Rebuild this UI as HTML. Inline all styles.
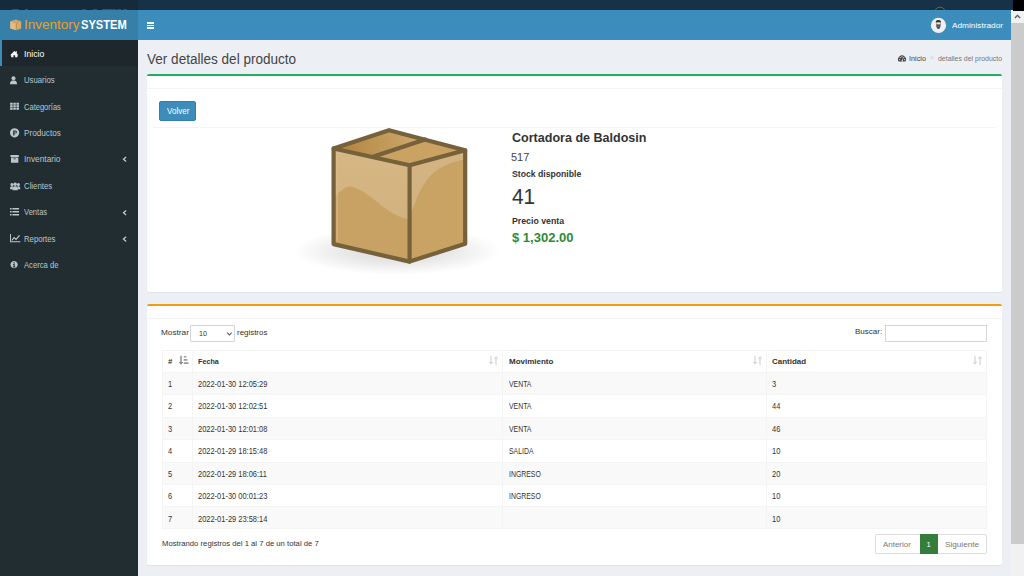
<!DOCTYPE html>
<html><head><meta charset="utf-8">
<style>
*{margin:0;padding:0;box-sizing:border-box}
html,body{width:1024px;height:576px;overflow:hidden;background:#ecf0f5;font-family:"Liberation Sans",sans-serif}
.a{position:absolute}
.t{position:absolute;white-space:pre;line-height:1;transform-origin:0 0}
</style></head><body>
<div class="a" style="left:0px;top:0px;width:1024px;height:10px;background:#152a3a"></div>
<div class="a" style="left:138px;top:0px;width:875px;height:10px;background:#173247"></div>
<div class="a" style="left:1013px;top:0px;width:11px;height:11px;background:#000"></div>
<div class="a" style="left:0px;top:10px;width:138px;height:30px;background:#367fa9"></div>
<div class="a" style="left:138px;top:10px;width:873px;height:30px;background:#3c8dbc"></div>
<div class="a" style="left:0px;top:40px;width:138px;height:536px;background:#222d32"></div>
<div class="a" style="left:1011px;top:10px;width:13px;height:566px;background:#f1f1f1"></div>
<div class="a" style="left:1013px;top:10px;width:11px;height:1px;background:#000"></div>
<div class="a" style="left:1011px;top:23px;width:13px;height:521px;background:#cbcbcb"></div>
<svg class="a" style="left:1011px;top:10px" width="13" height="13" viewBox="1011 10 13 13"><polyline points="1014.9,18 1017.5,15.4 1020.1,18" fill="none" stroke="#555" stroke-width="1.3"/></svg>
<div class="a" style="left:12px;top:9px;width:7px;height:1px;background:rgba(200,140,60,.35)"></div>
<div class="a" style="left:25px;top:9px;width:3px;height:1px;background:rgba(230,160,40,.3)"></div>
<div class="a" style="left:82px;top:9px;width:4px;height:1px;background:rgba(200,210,220,.22)"></div>
<div class="a" style="left:93px;top:9px;width:4px;height:1px;background:rgba(200,210,220,.22)"></div>
<div class="a" style="left:102px;top:9px;width:14px;height:1px;background:rgba(200,210,220,.22)"></div>
<div class="a" style="left:117px;top:9px;width:4px;height:1px;background:rgba(200,210,220,.22)"></div>
<div class="a" style="left:123px;top:9px;width:4px;height:1px;background:rgba(200,210,220,.22)"></div>
<svg class="a" style="left:930px;top:5px" width="20" height="5" viewBox="930 5 20 5"><circle cx="940" cy="12.6" r="5.4" fill="rgba(40,40,40,.7)" stroke="rgba(170,170,170,.45)" stroke-width="1"/></svg>
<svg class="a" style="left:8px;top:17px" width="16" height="16" viewBox="8 17 16 16">
<polygon points="15.8,19.6 21.2,21.3 16.2,23.2 10.2,21.3" fill="#d3a55e"/>
<polygon points="10.2,21.3 16.2,23.2 16.2,30.2 10.2,28.4" fill="#e6bd7c"/>
<polygon points="16.2,23.2 21.2,21.3 21.2,28.4 16.2,30.2" fill="#d8aa63"/>
<line x1="16.2" y1="23.2" x2="16.2" y2="30.2" stroke="#b98c48" stroke-width="0.8"/>
</svg>
<div class="t" style="left:23.9px;top:18.9px;font-size:12.75px;color:#f39c12;transform:scaleX(1.06);">Inventory</div>
<div class="t" style="left:80.76px;top:19.48px;font-size:12.56px;color:#fff;font-weight:bold;transform:scaleX(0.888);">SYSTEM</div>
<div class="a" style="left:147px;top:22.3px;width:7.4px;height:1.7px;background:#fff"></div>
<div class="a" style="left:147px;top:24.9px;width:7.4px;height:1.4px;background:#fff"></div>
<div class="a" style="left:147px;top:27.1px;width:7.4px;height:1.7px;background:#fff"></div>
<svg class="a" style="left:929px;top:16px" width="19" height="19" viewBox="929 16 19 19">
<circle cx="938.5" cy="25.4" r="7.6" fill="#f0f0f0"/>
<path d="M935.8,22 C935.8,20.6 936.9,19.9 938.4,19.9 C939.9,19.9 941,20.6 941,22 L940.8,25.5 C940.6,27.6 939.6,28.9 938.4,28.9 C937.2,28.9 936.2,27.6 936,25.5 Z" fill="#9a9a9a"/>
<path d="M936.6,22.3 h3.6 v2.0 h-3.6 Z" fill="#e6e6e6"/>
<path d="M935.8,22.2 C935.8,20.6 936.9,19.9 938.4,19.9 C939.9,19.9 941,20.6 941,22.2 L940.6,22.2 L936.2,22.2 Z" fill="#333"/>
<path d="M936.4,24.4 h4 C940.3,27 939.6,28.9 938.4,28.9 C937.2,28.9 936.5,27 936.4,24.4 Z" fill="#505050"/>
<path d="M937.6,25.8 h1.6 v0.7 h-1.6 Z" fill="#8a8a8a"/>
</svg>
<div class="t" style="left:952.24px;top:21.71px;font-size:8.01px;color:#fff;transform:scaleX(1.034);">Administrador</div>
<div class="a" style="left:0px;top:40px;width:138px;height:26.4px;background:#1e282c"></div>
<div class="a" style="left:0px;top:40px;width:2px;height:26.4px;background:#3c8dbc"></div>
<div class="t" style="left:23.62px;top:49.74px;font-size:8.6px;color:#fff;transform:scaleX(1.008);">Inicio</div>
<div class="t" style="left:23.78px;top:76.14px;font-size:8.6px;color:#b8c7ce;transform:scaleX(0.903);">Usuarios</div>
<div class="t" style="left:24.02px;top:102.54px;font-size:8.6px;color:#b8c7ce;transform:scaleX(0.877);">Categorías</div>
<div class="t" style="left:23.75px;top:128.94px;font-size:8.6px;color:#b8c7ce;transform:scaleX(0.951);">Productos</div>
<div class="t" style="left:23.65px;top:155.34px;font-size:8.6px;color:#b8c7ce;transform:scaleX(0.967);">Inventario</div>
<div class="t" style="left:24.01px;top:181.74px;font-size:8.6px;color:#b8c7ce;transform:scaleX(0.908);">Clientes</div>
<div class="t" style="left:24.32px;top:208.14px;font-size:8.6px;color:#b8c7ce;transform:scaleX(0.88);">Ventas</div>
<div class="t" style="left:23.78px;top:234.54px;font-size:8.6px;color:#b8c7ce;transform:scaleX(0.902);">Reportes</div>
<div class="t" style="left:24.4px;top:260.94px;font-size:8.6px;color:#b8c7ce;transform:scaleX(0.89);">Acerca de</div>
<svg class="a" style="left:0;top:40px" width="138" height="240" viewBox="0 40 138 240">
<g fill="#fff">
<path d="M10.2,55.2 L14.3,51 L15.6,52.3 L15.6,51.2 L16.8,51.2 L16.8,53.5 L18.4,55.2 L17.4,55.2 L17.4,57.2 L15.2,57.2 L15.2,55.3 L13.4,55.3 L13.4,57.2 L11.2,57.2 L11.2,55.2 Z"/>
</g>
<g fill="#b8c7ce">
<circle cx="13.5" cy="78.3" r="2"/>
<path d="M10,84.2 C10,81.5 11.2,80.4 12.3,80.4 L14.7,80.4 C15.8,80.4 17,81.5 17,84.2 Z"/>
<path d="M10.1,102.7h2.6v2.1h-2.6zM13.3,102.7h2.5v2.1h-2.5zM16.4,102.7h2.6v2.1h-2.6zM10.1,105.3h2.6v2h-2.6zM13.3,105.3h2.5v2h-2.5zM16.4,105.3h2.6v2h-2.6zM10.1,107.8h2.6v2h-2.6zM13.3,107.8h2.5v2h-2.5zM16.4,107.8h2.6v2h-2.6z"/>
<path fill-rule="evenodd" d="M14.6,128.2 a4.6,4.6 0 1,0 0.01,0 Z M13.2,130.6 h2.2 a1.5,1.5 0 0,1 0,3 h-1 v1.8 h-1.2 Z M14.4,131.6 v1.1 h0.9 a0.55,0.55 0 0,0 0,-1.1 Z"/>
<path fill-rule="evenodd" d="M10.5,155 h8.3 v2 h-8.3 Z M11,157.6 h7.3 v5.1 h-7.3 Z M13.6,158.4 h2.1 v0.9 h-2.1 Z"/>
<path d="M11.9,184.6 m-1.5,0 a1.5,1.5 0 1,0 3,0 a1.5,1.5 0 1,0 -3,0 Z M18.4,184.6 m-1.5,0 a1.5,1.5 0 1,0 3,0 a1.5,1.5 0 1,0 -3,0 Z M15.15,184.2 m-1.8,0 a1.8,1.8 0 1,0 3.6,0 a1.8,1.8 0 1,0 -3.6,0 Z M10,189.2 c0,-2 0.5,-3 1.6,-3 h1.4 c-0.3,0.6 -0.4,1.6 -0.4,3 Z M20.3,189.2 c0,-2 -0.5,-3 -1.6,-3 h-1.4 c0.3,0.6 0.4,1.6 0.4,3 Z M12.5,190.2 c0,-2.6 0.7,-3.9 2.1,-3.9 h1.1 c1.4,0 2.1,1.3 2.1,3.9 Z"/>
<path d="M10,208h1.6v1.6h-1.6zM12.4,208h6.6v1.6h-6.6zM10,211h1.6v1.6h-1.6zM12.4,211h6.6v1.6h-6.6zM10,214h1.6v1.6h-1.6zM12.4,214h6.6v1.6h-6.6z"/>
<path d="M10,234 h1 v7.2 h9.3 v1 h-10.3 Z M11.5,240 L14,236.8 L16,238.6 L19,235 L20,235.8 L16.1,240.3 L14.1,238.5 L12.3,240.8 Z"/>
<path fill-rule="evenodd" d="M14.1,261 a3.6,3.6 0 1,0 0.01,0 Z M13.5,262.3 h1.2 v1.1 h-1.2 Z M13,263.9 h1.7 v2.7 h0.6 v0.8 h-2.3 v-0.8 h0.6 v-1.9 h-0.6 Z"/>
</g>
<g fill="none" stroke="#b8c7ce" stroke-width="1.35" stroke-linecap="butt" stroke-linejoin="miter">
<polyline points="126.1,156.9 123.5,159.2 126.1,161.5"/>
<polyline points="126.1,210.5 123.5,212.8 126.1,215.1"/>
<polyline points="126.1,236.8 123.5,239.1 126.1,241.4"/>
</g>
</svg>
<div class="t" style="left:146.86px;top:51.5px;font-size:14.18px;color:#444;transform:scaleX(0.956);">Ver detalles del producto</div>
<svg class="a" style="left:896px;top:53px" width="12" height="10" viewBox="896 53 12 10">
<path d="M898.6,61.6 A4,4 0 1,1 905.4,61.6 Z" fill="#444"/>
<circle cx="899.5" cy="59.6" r="0.6" fill="#ecf0f5"/><circle cx="900.3" cy="57.6" r="0.6" fill="#ecf0f5"/><circle cx="902" cy="56.7" r="0.6" fill="#ecf0f5"/><circle cx="903.7" cy="57.6" r="0.6" fill="#ecf0f5"/><circle cx="904.5" cy="59.6" r="0.6" fill="#ecf0f5"/>
<path d="M901.3,61.2 L903.2,57.8 L902.7,61.3 Z" fill="#ecf0f5"/>
</svg>
<div class="t" style="left:908.86px;top:55.09px;font-size:7.0px;color:#444;transform:scaleX(1.038);">Inicio</div>
<div class="t" style="left:929.8px;top:55.0px;font-size:6.8px;color:#ccc;">&gt;</div>
<div class="t" style="left:938.22px;top:54.73px;font-size:7.0px;color:#777;transform:scaleX(0.992);">detalles del producto</div>
<div class="a" style="left:147px;top:74px;width:855px;height:218px;background:#fff;box-shadow:0 1px 1px rgba(0,0,0,.06);border-radius:2px"></div>
<div class="a" style="left:147px;top:74px;width:855px;height:2px;background:#22ad64;border-radius:2px 2px 0 0"></div>
<div class="a" style="left:147px;top:87.5px;width:855px;height:1px;background:#f4f4f4"></div>
<div class="a" style="left:159px;top:100.5px;width:37.2px;height:20.7px;background:#3c8dbc;border:1px solid #367fa9;border-radius:2px"></div>
<div class="t" style="left:166.66px;top:107.1px;font-size:8.7px;color:#fff;transform:scaleX(0.926);">Volver</div>
<div class="a" style="left:153px;top:127.3px;width:843px;height:1px;background:#f4f4f4"></div>
<svg class="a" style="left:280px;top:120px" width="240" height="170" viewBox="280 120 240 170">
<defs>
<radialGradient id="sh" cx="0.5" cy="0.5" r="0.5">
<stop offset="0" stop-color="#000" stop-opacity="0.16"/>
<stop offset="0.5" stop-color="#000" stop-opacity="0.09"/>
<stop offset="1" stop-color="#000" stop-opacity="0"/>
</radialGradient>
<linearGradient id="fl" x1="0" y1="0" x2="0" y2="1">
<stop offset="0" stop-color="#d6b886"/>
<stop offset="1" stop-color="#d0ae78"/>
</linearGradient>
<linearGradient id="tf" x1="345" y1="152" x2="415" y2="135" gradientUnits="userSpaceOnUse">
<stop offset="0" stop-color="#b38743"/>
<stop offset="1" stop-color="#cca86c"/>
</linearGradient>
</defs>
<ellipse cx="397" cy="251" rx="104" ry="24" fill="url(#sh)"/>
<polygon points="333.6,148.5 409.6,165.2 409.6,261.6 333.6,244.1" fill="url(#fl)"/>
<path d="M333.6,199 C340,191 345,186 351,186.5 C364,189 378,204 392,213 C398,216.5 404,218.5 409.6,219.5 L409.6,261.6 L333.6,244.1 Z" fill="#c8a264"/>
<polygon points="409.6,165.2 465.2,150.3 465.2,243.7 409.6,261.6" fill="#d3b381"/>
<path d="M411,214 C416,199 421,186 431,175 C441,166 452,161.5 465.2,159.5 L465.2,243.7 L409.6,261.6 Z" fill="#c9a364"/>
<polygon points="389,130.2 333.6,148.5 372.2,156.9 425,139.4" fill="url(#tf)"/>
<polygon points="372.2,156.9 425,139.4 465.2,150.3 409.6,165.2" fill="#c9a264"/>
<line x1="337" y1="152" x2="337" y2="241" stroke="#dcbd8a" stroke-width="1"/>
<g fill="none" stroke="#76613a" stroke-width="4.2" stroke-linejoin="round" stroke-linecap="round">
<polygon points="389,130.2 465.2,150.3 465.2,243.7 409.6,261.6 333.6,244.1 333.6,148.5"/>
<polyline points="333.6,148.5 409.6,165.2 465.2,150.3"/>
<line x1="409.6" y1="165.2" x2="409.6" y2="261.6"/>
<line x1="372.2" y1="156.9" x2="425" y2="139.4"/>
</g>
</svg>
<div class="t" style="left:512.22px;top:131.7px;font-size:12.81px;color:#333;font-weight:bold;transform:scaleX(0.98);">Cortadora de Baldosin</div>
<div class="t" style="left:511.11px;top:151.59px;font-size:10.86px;color:#444;transform:scaleX(1.012);">517</div>
<div class="t" style="left:512.46px;top:169.82px;font-size:9.04px;color:#333;font-weight:bold;transform:scaleX(0.958);">Stock disponible</div>
<div class="t" style="left:512.28px;top:185.66px;font-size:22.29px;color:#333;transform:scaleX(0.933);">41</div>
<div class="t" style="left:512.1px;top:217.44px;font-size:8.49px;color:#333;font-weight:bold;transform:scaleX(1.032);">Precio venta</div>
<div class="t" style="left:512.37px;top:230.5px;font-size:13.6px;color:#2f8a36;font-weight:bold;transform:scaleX(0.958);">$ 1,302.00</div>
<div class="a" style="left:147px;top:304px;width:855px;height:261px;background:#fff;box-shadow:0 1px 1px rgba(0,0,0,.06);border-radius:2px"></div>
<div class="a" style="left:147px;top:304px;width:855px;height:2px;background:#f39c12;border-radius:2px 2px 0 0"></div>
<div class="a" style="left:147px;top:317.5px;width:855px;height:1px;background:#f4f4f4"></div>
<div class="t" style="left:161.11px;top:329.1px;font-size:8.0px;color:#333;transform:scaleX(1.028);">Mostrar</div>
<div class="a" style="left:190.2px;top:324.9px;width:45.1px;height:17.6px;border:1px solid #d2d6de;background:#fff;border-radius:1px"></div>
<div class="t" style="left:198.95px;top:330.63px;font-size:7.14px;color:#333;transform:scaleX(0.99);">10</div>
<svg class="a" style="left:225px;top:330px" width="9" height="8" viewBox="225 330 9 8"><polyline points="227.2,332.6 229.4,335 231.6,332.6" fill="none" stroke="#555" stroke-width="1.1"/></svg>
<div class="t" style="left:236.89px;top:328.83px;font-size:8.0px;color:#333;transform:scaleX(0.99);">registros</div>
<div class="t" style="left:855.12px;top:328.22px;font-size:8.0px;color:#333;transform:scaleX(1.004);">Buscar:</div>
<div class="a" style="left:885.3px;top:324.9px;width:101.7px;height:17.6px;border:1px solid #d2d6de;background:#fff"></div>
<div class="a" style="left:162px;top:371.7px;width:825px;height:22.45px;background:#f9f9f9;border-top:1px solid #f4f4f4"></div>
<div class="a" style="left:162px;top:394.15px;width:825px;height:22.45px;background:#fff;border-top:1px solid #f4f4f4"></div>
<div class="a" style="left:162px;top:416.6px;width:825px;height:22.45px;background:#f9f9f9;border-top:1px solid #f4f4f4"></div>
<div class="a" style="left:162px;top:439.05px;width:825px;height:22.45px;background:#fff;border-top:1px solid #f4f4f4"></div>
<div class="a" style="left:162px;top:461.5px;width:825px;height:22.45px;background:#f9f9f9;border-top:1px solid #f4f4f4"></div>
<div class="a" style="left:162px;top:483.95px;width:825px;height:22.45px;background:#fff;border-top:1px solid #f4f4f4"></div>
<div class="a" style="left:162px;top:506.4px;width:825px;height:22.45px;background:#f9f9f9;border-top:1px solid #f4f4f4"></div>
<div class="a" style="left:162px;top:349.5px;width:825px;height:179.35px;border:1px solid #f4f4f4"></div>
<div class="a" style="left:192px;top:349.5px;width:1px;height:179.35px;background:#f4f4f4"></div>
<div class="a" style="left:501.6px;top:349.5px;width:1px;height:179.35px;background:#f4f4f4"></div>
<div class="a" style="left:766px;top:349.5px;width:1px;height:179.35px;background:#f4f4f4"></div>
<div class="t" style="left:168.1px;top:358.01px;font-size:7.75px;color:#333;font-weight:bold;">#</div>
<div class="t" style="left:198.2px;top:358.01px;font-size:7.75px;color:#333;font-weight:bold;transform:scaleX(0.93);">Fecha</div>
<div class="t" style="left:508.8px;top:358.01px;font-size:7.75px;color:#333;font-weight:bold;transform:scaleX(1.03);">Movimiento</div>
<div class="t" style="left:772.0px;top:358.01px;font-size:7.75px;color:#333;font-weight:bold;transform:scaleX(1.03);">Cantidad</div>
<div class="t" style="left:168.0px;top:379.94px;font-size:8.3px;color:#333;transform:scaleX(0.9);">1</div>
<div class="t" style="left:198.1px;top:379.94px;font-size:8.3px;color:#333;transform:scaleX(0.9);">2022-01-30 12:05:29</div>
<div class="t" style="left:508.7px;top:379.94px;font-size:8.3px;color:#333;transform:scaleX(0.83);">VENTA</div>
<div class="t" style="left:771.9px;top:379.94px;font-size:8.3px;color:#333;transform:scaleX(0.9);">3</div>
<div class="t" style="left:168.0px;top:402.39px;font-size:8.3px;color:#333;transform:scaleX(0.9);">2</div>
<div class="t" style="left:198.1px;top:402.39px;font-size:8.3px;color:#333;transform:scaleX(0.9);">2022-01-30 12:02:51</div>
<div class="t" style="left:508.7px;top:402.39px;font-size:8.3px;color:#333;transform:scaleX(0.83);">VENTA</div>
<div class="t" style="left:771.9px;top:402.39px;font-size:8.3px;color:#333;transform:scaleX(0.9);">44</div>
<div class="t" style="left:168.0px;top:424.84px;font-size:8.3px;color:#333;transform:scaleX(0.9);">3</div>
<div class="t" style="left:198.1px;top:424.84px;font-size:8.3px;color:#333;transform:scaleX(0.9);">2022-01-30 12:01:08</div>
<div class="t" style="left:508.7px;top:424.84px;font-size:8.3px;color:#333;transform:scaleX(0.83);">VENTA</div>
<div class="t" style="left:771.9px;top:424.84px;font-size:8.3px;color:#333;transform:scaleX(0.9);">46</div>
<div class="t" style="left:168.0px;top:447.29px;font-size:8.3px;color:#333;transform:scaleX(0.9);">4</div>
<div class="t" style="left:198.1px;top:447.29px;font-size:8.3px;color:#333;transform:scaleX(0.9);">2022-01-29 18:15:48</div>
<div class="t" style="left:508.7px;top:447.29px;font-size:8.3px;color:#333;transform:scaleX(0.83);">SALIDA</div>
<div class="t" style="left:771.9px;top:447.29px;font-size:8.3px;color:#333;transform:scaleX(0.9);">10</div>
<div class="t" style="left:168.0px;top:469.75px;font-size:8.3px;color:#333;transform:scaleX(0.9);">5</div>
<div class="t" style="left:198.1px;top:469.75px;font-size:8.3px;color:#333;transform:scaleX(0.9);">2022-01-29 18:06:11</div>
<div class="t" style="left:508.7px;top:469.75px;font-size:8.3px;color:#333;transform:scaleX(0.83);">INGRESO</div>
<div class="t" style="left:771.9px;top:469.75px;font-size:8.3px;color:#333;transform:scaleX(0.9);">20</div>
<div class="t" style="left:168.0px;top:492.19px;font-size:8.3px;color:#333;transform:scaleX(0.9);">6</div>
<div class="t" style="left:198.1px;top:492.19px;font-size:8.3px;color:#333;transform:scaleX(0.9);">2022-01-30 00:01:23</div>
<div class="t" style="left:508.7px;top:492.19px;font-size:8.3px;color:#333;transform:scaleX(0.83);">INGRESO</div>
<div class="t" style="left:771.9px;top:492.19px;font-size:8.3px;color:#333;transform:scaleX(0.9);">10</div>
<div class="t" style="left:168.0px;top:514.64px;font-size:8.3px;color:#333;transform:scaleX(0.9);">7</div>
<div class="t" style="left:198.1px;top:514.64px;font-size:8.3px;color:#333;transform:scaleX(0.9);">2022-01-29 23:58:14</div>
<div class="t" style="left:771.9px;top:514.64px;font-size:8.3px;color:#333;transform:scaleX(0.9);">10</div>
<svg class="a" style="left:177.5px;top:355px" width="11" height="11" viewBox="0 0 11 11"><path d="M2.3,0.8h1.4v6.3h1.7L3,9.8L0.6,7.1h1.7Z" fill="#8a8a8a"/><path d="M5.8,1h2.6v1.6h-2.6Z M5.8,4.1h3.6v1.7h-3.6Z M5.8,7.3h4.7v1.7h-4.7Z" fill="#9a9a9a"/></svg>
<svg class="a" style="left:488.2px;top:355px" width="11" height="11" viewBox="0 0 11 11"><path d="M2.3,0.8h1.4v6.3h1.7L3,9.8L0.6,7.1h1.7Z M7.3,10h1.4V3.7h1.7L8,1L5.6,3.7h1.7Z" fill="#dadada"/></svg>
<svg class="a" style="left:751.5px;top:355px" width="11" height="11" viewBox="0 0 11 11"><path d="M2.3,0.8h1.4v6.3h1.7L3,9.8L0.6,7.1h1.7Z M7.3,10h1.4V3.7h1.7L8,1L5.6,3.7h1.7Z" fill="#dadada"/></svg>
<svg class="a" style="left:972.0px;top:355px" width="11" height="11" viewBox="0 0 11 11"><path d="M2.3,0.8h1.4v6.3h1.7L3,9.8L0.6,7.1h1.7Z M7.3,10h1.4V3.7h1.7L8,1L5.6,3.7h1.7Z" fill="#dadada"/></svg>
<div class="t" style="left:161.84px;top:540.19px;font-size:8.0px;color:#333;transform:scaleX(0.963);">Mostrando registros del 1 al 7 de un total de 7</div>
<div class="a" style="left:875.2px;top:534.4px;width:111.8px;height:20px;border:1px solid #ddd;border-radius:2px;background:#fff"></div>
<div class="a" style="left:919.8px;top:534.4px;width:18.3px;height:20px;background:#367c3b"></div>
<div class="t" style="left:883.02px;top:540.61px;font-size:7.7px;color:#777;transform:scaleX(1.035);">Anterior</div>
<div class="t" style="left:926.4px;top:540.75px;font-size:7.7px;color:#fff;">1</div>
<div class="t" style="left:945.16px;top:540.61px;font-size:7.7px;color:#777;transform:scaleX(1.063);">Siguiente</div>
</body></html>
